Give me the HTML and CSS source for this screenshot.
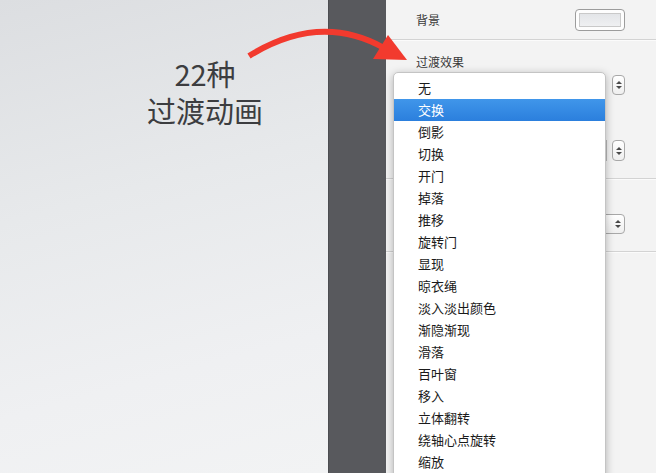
FILE: index.html
```html
<!DOCTYPE html>
<html lang="zh">
<head>
<meta charset="utf-8">
<link rel="stylesheet" href="styles.css">
</head>
<body>
<div class="app">
  <div class="canvas">
    <div class="caption">22种<br>过渡动画</div>
  </div>
  <div class="strip"></div>
  <div class="panel">
    <div class="sec sec-bg">
      <span class="label">背景</span>
      <div class="swatch"><div class="swatch-in"></div></div>
    </div>
    <div class="sec sec-trans">
      <div class="label">过渡效果</div>
      <div class="ctl-row r1"><div class="stepper"><span class="up"></span><span class="down"></span></div></div>
      <div class="ctl-row r2"><div class="field"></div><div class="stepper tall"><span class="up"></span><span class="down"></span></div></div>
    </div>
    <div class="sec sec-3">
      <div class="ctl-row r3"><div class="popup"><span class="up"></span><span class="down"></span></div></div>
    </div>
  </div>
</div>

<ul class="menu">
  <li>无</li>
  <li class="sel">交换</li>
  <li>倒影</li>
  <li>切换</li>
  <li>开门</li>
  <li>掉落</li>
  <li>推移</li>
  <li>旋转门</li>
  <li>显现</li>
  <li>晾衣绳</li>
  <li>淡入淡出颜色</li>
  <li>渐隐渐现</li>
  <li>滑落</li>
  <li>百叶窗</li>
  <li>移入</li>
  <li>立体翻转</li>
  <li>绕轴心点旋转</li>
  <li>缩放</li>
</ul>

<svg class="arrow" width="656" height="473" viewBox="0 0 656 473">
  <path d="M249 56 Q320 12 384 48" fill="none" stroke="#f23a2e" stroke-width="6"/>
  <polygon points="373,59 388,35 407,60" fill="#f23a2e"/>
</svg>
</body>
</html>
```

FILE: styles.css
```css
* { box-sizing: border-box; }
html, body { margin: 0; padding: 0; }
body {
  width: 656px;
  height: 473px;
  overflow: hidden;
  font-family: "Noto Sans CJK SC", "Noto Sans", sans-serif;
  position: relative;
}
.app {
  display: flex;
  height: 473px;
}
.canvas {
  width: 328px;
  flex: none;
  background: linear-gradient(165deg, #dcdee1 0%, #e7e9eb 40%, #eff0f2 75%, #f2f3f4 100%);
  padding: 55px 0 0 82px;
}
.caption {
  text-align: center;
  font-size: 29px;
  line-height: 37px;
  color: #3c3d40;
}
.strip {
  width: 58px;
  flex: none;
  background: #58595d;
  border-left: 1px solid #4c4d51;
}
.panel {
  flex: 1;
  background: #f3f3f3;
  display: flex;
  flex-direction: column;
}
.sec {
  border-bottom: 1px solid #d3d3d3;
  box-shadow: 0 1px 0 #fbfbfb;
}
.label {
  font-size: 12px;
  line-height: 16px;
  color: #3a3a3a;
}
.sec-bg {
  height: 40px;
  display: flex;
  align-items: center;
  justify-content: space-between;
  padding: 0 31px 0 30px;
}
.swatch {
  width: 50px;
  height: 22px;
  border: 1px solid #9c9c9c;
  border-radius: 4px;
  background: #fdfdfd;
  padding: 3px;
  margin-top: 1px;
}
.swatch-in {
  height: 100%;
  border: 1px solid #c9c9c9;
  background: linear-gradient(180deg, #e3e5e8, #eff0f2);
}
.sec-trans {
  height: 139px;
  padding: 14px 31px 0 30px;
}
.ctl-row {
  display: flex;
  justify-content: flex-end;
  align-items: center;
  gap: 5px;
}
.r1 { margin-top: 5px; }
.r2 { margin-top: 45px; }
.field {
  width: 100px;
  height: 21px;
  background: #fff;
  border: 1px solid #b9b9b9;
}
.stepper, .popup {
  width: 13px;
  height: 20px;
  border: 1px solid #a8a8a8;
  border-radius: 4px;
  background: linear-gradient(#ffffff, #efefef);
  display: flex;
  flex-direction: column;
  align-items: center;
  justify-content: center;
  gap: 2px;
}
.stepper.tall { height: 21px; }
.popup {
  width: 120px;
  border-radius: 4px;
  align-items: flex-end;
  padding-right: 3px;
}
.up, .down {
  width: 0;
  height: 0;
  border-left: 3px solid transparent;
  border-right: 3px solid transparent;
}
.up { border-bottom: 3px solid #4a4a4a; }
.down { border-top: 3px solid #4a4a4a; }
.sec-3 {
  height: 73px;
  padding: 35px 31px 0 30px;
}
.menu {
  position: absolute;
  left: 393px;
  top: 72px;
  width: 213px;
  height: 420px;
  margin: 0;
  padding: 4px 0 0 0;
  list-style: none;
  background: #ffffff;
  border: 1px solid #c4c4c4;
  border-radius: 5px 5px 0 0;
  box-shadow: 0 2px 8px rgba(0,0,0,0.28);
}
.menu li {
  height: 22px;
  line-height: 21px;
  padding-left: 24px;
  font-size: 13px;
  color: #1a1a1a;
}
.menu li.sel {
  background: linear-gradient(180deg, #4096ea 0%, #2b7fdd 100%);
  color: #ffffff;
}
.arrow {
  position: absolute;
  left: 0;
  top: 0;
  pointer-events: none;
}
```
